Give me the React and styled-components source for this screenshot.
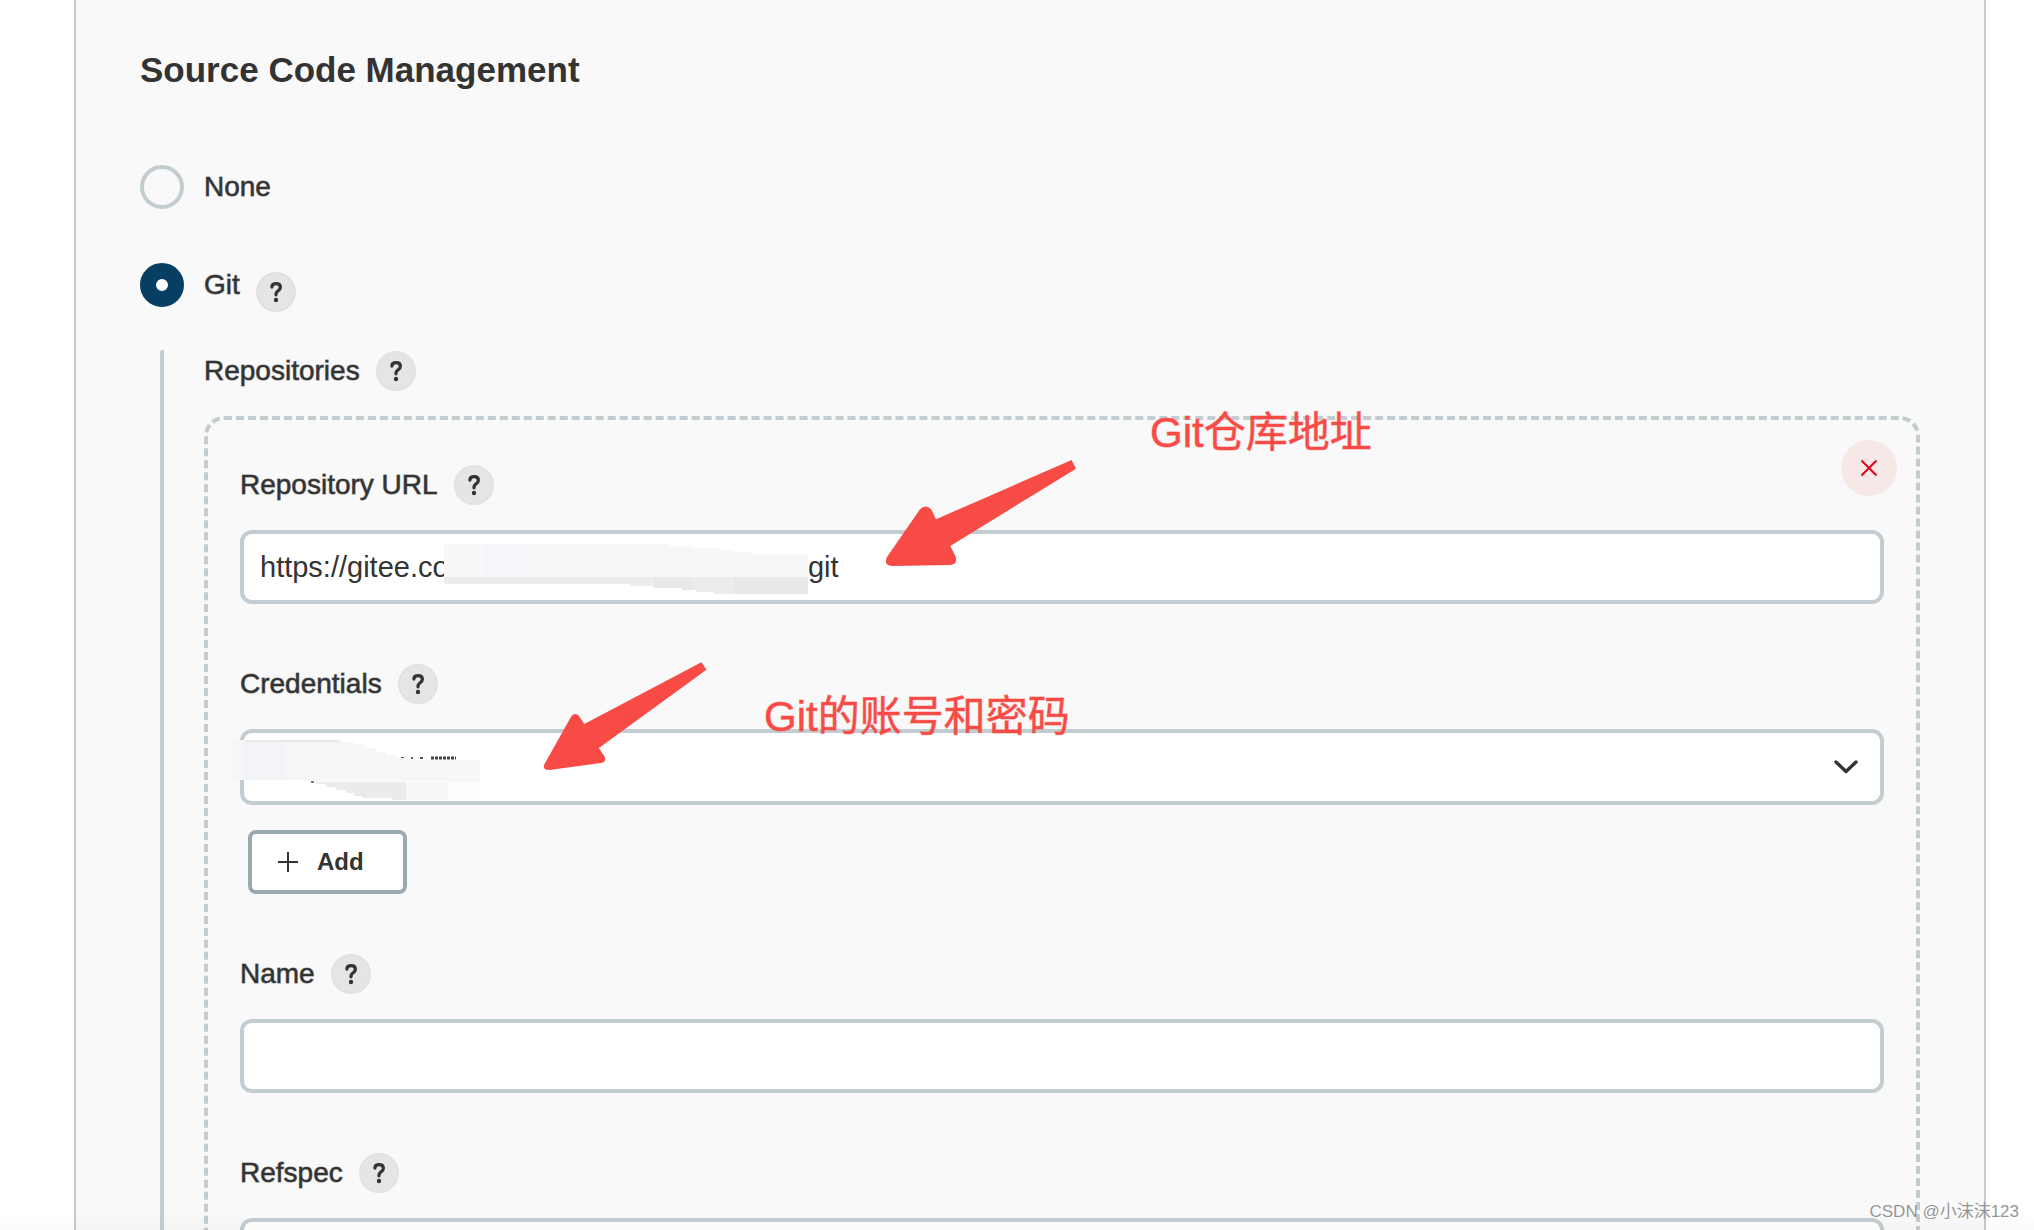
import React from 'react';
import styled, { createGlobalStyle } from 'styled-components';

const sans = `"Liberation Sans", "Noto Sans CJK SC", sans-serif`;

const theme = {
  text: '#333333',
  panel: '#f9f9f9',
  border: '#c3ccd1',
  borderDark: '#9aa8af',
  primary: '#063f63',
  danger: '#e6001f',
  mark: '#f84b46',
};

// the repository path stays blank between the host and the extension
const repositoryUrl = `https://gitee.co${'\u2002'.repeat(2)}${'\u00a0'.repeat(41)}git`;

function Help({ topic, low }) {
  return (
    <HelpButton type="button" aria-label={`Help for feature: ${topic}`} $low={low}>
      <svg width="16" height="24" viewBox="0 0 16 24" fill="none">
        <path
          d="M3.9 7.100C3.900 4.800 5.600 3.600 8.100 3.600s4.300 1.300 4.300 3.600c0 1.700-1 2.600-2.200 3.500S8 12.300 8 14.300v.500"
          stroke="currentColor"
          strokeWidth="3.200"
          strokeLinecap="round"
        />
        <circle cx="8" cy="20" r="2.200" fill="currentColor" />
      </svg>
    </HelpButton>
  );
}

function Field({ id, label, children }) {
  return (
    <FieldStyled>
      <LabelRow>
        <label htmlFor={id}>{label}</label>
        <Help topic={label} />
      </LabelRow>
      {children}
    </FieldStyled>
  );
}

function App() {
  return (
    <>
      <GlobalStyle />
      <Page>
        <Panel>
          <Title>Source Code Management</Title>
          <RadioRow>
            <Radio type="radio" name="scm" id="scm-none" />
            <label htmlFor="scm-none">None</label>
          </RadioRow>
          <RadioRow>
            <Radio type="radio" name="scm" id="scm-git" defaultChecked />
            <label htmlFor="scm-git">Git</label>
            <Help topic="Git" low />
          </RadioRow>
          <Nested>
            <LabelRow>
              <span>Repositories</span>
              <Help topic="Repositories" />
            </LabelRow>
            <Repository>
              <RemoveButton type="button" aria-label="Remove repository">
                <svg width="18" height="18" viewBox="0 0 18 18">
                  <path d="M1.500 1.500l15 15M16.500 1.500l-15 15" stroke="currentColor" strokeWidth="2" />
                </svg>
              </RemoveButton>
              <Field id="url" label="Repository URL">
                <Control>
                  <TextInput id="url" type="text" defaultValue={repositoryUrl} />
                  <UrlMask width="364" height="50" viewBox="0 0 364 50">
                    <path d="M0 0H224V2H248V4H276V6H290V8H308V10H364V33H0Z" fill="#f6f8f8" />
                    <path d="M0 0H40V32H0Z" fill="#f8f8f8" />
                    <path d="M40 0H90V32H40Z" fill="#f5f6f9" />
                    <path d="M0 33H364V50H270V48H252V46H238V44H210V42H186V40H0Z" fill="#ececec" />
                    <path d="M210 33H248V46H238V44H210ZM290 33H364V50H290Z" fill="#e8e8e8" />
                  </UrlMask>
                </Control>
              </Field>
              <Field id="credentials" label="Credentials">
                <Control>
                  <Select id="credentials">
                    <option value="" />
                  </Select>
                  <Chevron width="28" height="18" viewBox="0 0 28 18" fill="none">
                    <path
                      d="M4 4l10 9.500L24 4"
                      stroke="currentColor"
                      strokeWidth="3.400"
                      strokeLinecap="round"
                      strokeLinejoin="round"
                    />
                  </Chevron>
                  <CredentialsMask width="248" height="62" viewBox="0 0 248 62">
                    <path d="M169 18h3M179 18h2M188 18h3" stroke="#555555" strokeWidth="2" />
                    <path d="M199 18h25" stroke="#444444" strokeWidth="3" strokeDasharray="3 1" />
                    <path d="M79 42h3" stroke="#777777" strokeWidth="2" />
                    <path
                      d="M0 0H108V2H122V4H132V8H144V12H154V15H164V18H174V20H248V41H70V40H0Z"
                      fill="#f5f7f7"
                    />
                    <path d="M13 0H108V2H13Z" fill="#e8e8e8" />
                    <path d="M13 2H52V40H13Z" fill="#f3f4f7" />
                    <path d="M84 42H174V60H160V58H130V56H122V53H114V50H104V47H94V44H84Z" fill="#ebebeb" />
                    <path d="M174 42H216V60H174Z" fill="#f8f8f8" />
                    <path d="M216 20H248V42H216Z" fill="#f7f7f7" />
                    <path d="M216 42H248V60H216Z" fill="#fdfdfd" />
                  </CredentialsMask>
                </Control>
                <AddButton type="button">
                  <svg width="20" height="20" viewBox="0 0 20 20">
                    <path d="M10 0v20M0 10h20" stroke="currentColor" strokeWidth="2" />
                  </svg>
                  Add
                </AddButton>
              </Field>
              <Field id="name" label="Name">
                <TextInput id="name" type="text" />
              </Field>
              <Field id="refspec" label="Refspec">
                <TextInput id="refspec" type="text" />
              </Field>
            </Repository>
          </Nested>
        </Panel>
        <BottomFade />
        <Arrow $x={880} $y={455} width="200" height="115" viewBox="880 455 200 115">
          <path d="M1071.600 460L1076 468.700L950.300 546L955.600 556.500Q958 564.500 950 565L892 566Q883 565 887 557L919.800 509.500Q925.700 503.500 931.300 509.500L936 519.300Z" />
        </Arrow>
        <Arrow $x={540} $y={655} width="170" height="120" viewBox="540 655 170 120">
          <path d="M701.400 662.300L706.400 669.700L598.900 748L604.500 756.500Q607 762 601 763L549.300 770Q542 770 544.500 764L571.500 716Q575.400 712 579 716L584.300 724Z" />
        </Arrow>
        <Note $x={1150} $y={409}>Git仓库地址</Note>
        <Note $x={764} $y={693}>Git的账号和密码</Note>
        <Watermark>CSDN @小沫沫123</Watermark>
      </Page>
    </>
  );
}

const GlobalStyle = createGlobalStyle`
    * {
        box-sizing: border-box;
    }

    body {
        margin: 0;
        background: #ffffff;
        color: ${theme.text};
        font-family: ${sans};
        font-size: 28px;
    }

    button, input, select {
        font-family: inherit;
        color: inherit;
    }
`;

const Page = styled.div`
    position: relative;
    height: 100vh;
    overflow: hidden;
`;

const Panel = styled.main`
    min-height: 100%;
    margin: 0 48px 0 74px;
    padding: 48px 64px;
    background: ${theme.panel};
    border: solid ${theme.border};
    border-width: 0 2px;
`;

const Title = styled.h1`
    margin: 0 0 73px;
    font-size: 35px;
    line-height: 44px;
    font-weight: 700;
`;

const RadioRow = styled.div`
    display: flex;
    align-items: center;
    height: 44px;
    margin-bottom: 54px;

    label {
        margin-left: 20px;
        line-height: 32px;
        -webkit-text-stroke: 1px rgba(51, 51, 51, 0.6);
    }

    & + & {
        margin-bottom: 43px;
    }
`;

const Radio = styled.input`
    appearance: none;
    flex: none;
    width: 44px;
    height: 44px;
    margin: 0;
    border: 4px solid ${theme.border};
    border-radius: 50%;

    &:checked {
        border: 16px solid ${theme.primary};
        background: #ffffff;
    }
`;

const HelpButton = styled.button`
    display: flex;
    align-items: center;
    justify-content: center;
    flex: none;
    width: 40px;
    height: 40px;
    margin: ${(props) => (props.$low ? '14px 0 0 16px' : '0 0 0 16px')};
    padding: 0;
    border: 2px solid #e2e2e2;
    border-radius: 50%;
    background: #e5e5e5;
    cursor: pointer;
`;

const Nested = styled.section`
    margin-left: 20px;
    padding: 1px 0 0 40px;
    border-left: 4px solid ${theme.border};
    border-top-left-radius: 2px;
`;

const LabelRow = styled.div`
    display: flex;
    align-items: center;
    height: 40px;
    margin-bottom: 25px;
    line-height: 32px;

    label, span {
        -webkit-text-stroke: 1px rgba(51, 51, 51, 0.6);
    }
`;

const Repository = styled.div`
    position: relative;
    display: flex;
    flex-direction: column;
    gap: 60px;
    padding: 45px 32px 60px;
    border: 4px dashed ${theme.border};
    border-radius: 20px;
`;

const RemoveButton = styled.button`
    position: absolute;
    top: 20px;
    right: 19px;
    display: flex;
    align-items: center;
    justify-content: center;
    width: 56px;
    height: 56px;
    padding: 0;
    border: none;
    border-radius: 50%;
    background: #f7e8e8;
    color: ${theme.danger};
    cursor: pointer;
`;

const FieldStyled = styled.div`
    display: flex;
    flex-direction: column;
`;

const Control = styled.div`
    position: relative;
    display: flex;
`;

const TextInput = styled.input`
    width: 100%;
    height: 74px;
    padding: 0 16px;
    border: 4px solid ${theme.border};
    border-radius: 12px;
    background: #ffffff;
    font-size: 29px;
    outline: none;
`;

const Select = styled.select`
    appearance: none;
    width: 100%;
    height: 76px;
    padding: 0 72px 0 16px;
    border: 4px solid ${theme.border};
    border-radius: 12px;
    background: #ffffff;
    font-size: 29px;
`;

const Chevron = styled.svg`
    position: absolute;
    top: 29px;
    right: 24px;
    pointer-events: none;
`;

const UrlMask = styled.svg`
    position: absolute;
    left: 204px;
    top: 14px;
    pointer-events: none;
`;

const CredentialsMask = styled.svg`
    position: absolute;
    left: -8px;
    top: 11px;
    pointer-events: none;
`;

const AddButton = styled.button`
    display: flex;
    align-items: center;
    align-self: flex-start;
    gap: 19px;
    height: 64px;
    margin: 25px 0 0 8px;
    padding: 0 39px 0 26px;
    border: 4px solid ${theme.borderDark};
    border-radius: 8px;
    background: #ffffff;
    font-size: 24px;
    font-weight: 700;
    cursor: pointer;
`;

const BottomFade = styled.div`
    position: absolute;
    inset: auto 0 0;
    height: 16px;
    background: linear-gradient(rgba(0, 0, 0, 0), rgba(0, 0, 0, 0.02));
    pointer-events: none;
`;

const Arrow = styled.svg`
    position: absolute;
    left: ${(props) => props.$x}px;
    top: ${(props) => props.$y}px;
    fill: ${theme.mark};
    pointer-events: none;
`;

const Note = styled.span`
    position: absolute;
    left: ${(props) => props.$x}px;
    top: ${(props) => props.$y}px;
    color: ${theme.mark};
    font-size: 42px;
    line-height: 48px;
    white-space: nowrap;
    -webkit-text-stroke: 1px rgba(248, 75, 70, 0.5);
`;

const Watermark = styled.span`
    position: absolute;
    right: 15px;
    bottom: 6px;
    color: #959595;
    font-size: 17px;
    line-height: 24px;
    text-shadow: -1px -1px 0 #ffffff;
`;

export default App;
